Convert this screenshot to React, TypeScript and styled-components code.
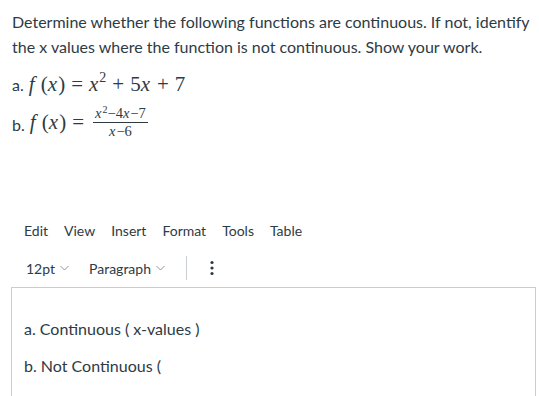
import React from "react";
import styled, { createGlobalStyle } from "styled-components";

const GlobalStyle = createGlobalStyle`
  body {
    margin: 0;
    background: #fff;
    font-family: Lato, "Noto Sans", sans-serif;
    color: #2d3b45;
  }
`;

const Page = styled.div`
  width: 539px;
  height: 396px;
  overflow: hidden;
  padding: 0 3px 0 12px;
  box-sizing: border-box;
`;

const Question = styled.div`
  font-size: 16px;
  line-height: 25px;
  padding-top: 9px;

  p {
    margin: 0 0 12px 0;
  }
`;

const MathLine = styled.p<{ $gap?: number }>`
  display: flex;
  align-items: center;
  height: 26px;
  margin-top: ${(p) => p.$gap ?? 0}px !important;
`;

const Formula = styled.span`
  font-family: "Liberation Serif", "DejaVu Serif", serif;
  font-size: 21px;
  margin-left: 5px;
  white-space: pre;
  line-height: 26px;
`;

const V = styled.i`
  font-style: italic;
  padding-right: 1px;
`;

const Op = styled.span`
  padding: 0 6px;
`;

const Sup = styled.sup<{ $size: number }>`
  font-size: ${(p) => p.$size}px;
  line-height: 0;
  vertical-align: ${(p) => (p.$size > 10 ? "9px" : "5px")};
`;

const Frac = styled.span`
  display: inline-flex;
  flex-direction: column;
  align-items: center;
  vertical-align: middle;
  font-size: 14.5px;
  line-height: 15px;
  margin-left: 3px;
  position: relative;
  top: -2px;
`;

const Num = styled.span`
  border-bottom: 1px solid #2d3b45;
  padding: 0 2px 1px;
`;

const Den = styled.span`
  padding-top: 1px;
`;

const MenuBar = styled.div`
  display: flex;
  gap: 16px;
  font-size: 14px;
  margin-top: 83px;
  padding-left: 12px;
  height: 20px;
  align-items: center;
`;

const Toolbar = styled.div`
  display: flex;
  align-items: center;
  font-size: 14px;
  margin-top: 16px;
  padding-left: 14px;
  height: 24px;
`;

const Dropdown = styled.span`
  display: inline-flex;
  align-items: center;
  gap: 5px;
  margin-right: 20px;
`;

const Divider = styled.span`
  width: 1px;
  height: 24px;
  background: #c7cdd1;
  margin: 0 23px 0 1px;
`;

const Editor = styled.div`
  margin: 7px 0 0 -1px;
  border: 1px solid #c7cdd1;
  border-bottom: none;
  height: 120px;
  padding: 28px 12px 0;
  font-size: 16px;

  p {
    margin: 0 0 12px 0;
    line-height: 25px;
  }
`;

const Chevron = () => (
  <svg width="9" height="6" viewBox="0 0 9 6">
    <path d="M0.5 1l4 4 4-4" fill="none" stroke="#8b969e" strokeWidth="1" />
  </svg>
);

const Kebab = () => (
  <svg width="4" height="16" viewBox="0 0 4 16">
    <circle cx="2" cy="2.5" r="1.6" fill="#2d3b45" />
    <circle cx="2" cy="8" r="1.6" fill="#2d3b45" />
    <circle cx="2" cy="13.5" r="1.6" fill="#2d3b45" />
  </svg>
);

export default function App() {
  return (
    <Page>
      <GlobalStyle />
      <Question>
        <p>
          Determine whether the following functions are continuous. If not, identify the x values
          where the function is not continuous. Show your work.
        </p>
        <MathLine>
          a.
          <Formula>
            <V>f</V> (<V>x</V>)<Op>=</Op>
            <V>x</V>
            <Sup $size={14}>2</Sup>
            <Op>+</Op>5<V>x</V>
            <Op>+</Op>7
          </Formula>
        </MathLine>
        <MathLine $gap={14}>
          b.
          <Formula>
            <V>f</V> (<V>x</V>)<Op>=</Op>
            <Frac>
              <Num>
                <V>x</V>
                <Sup $size={10}>2</Sup>−4<V>x</V>−7
              </Num>
              <Den>
                <V>x</V>−6
              </Den>
            </Frac>
          </Formula>
        </MathLine>
      </Question>
      <MenuBar>
        <span>Edit</span>
        <span>View</span>
        <span>Insert</span>
        <span>Format</span>
        <span>Tools</span>
        <span>Table</span>
      </MenuBar>
      <Toolbar>
        <Dropdown>
          12pt <Chevron />
        </Dropdown>
        <Dropdown>
          Paragraph <Chevron />
        </Dropdown>
        <Divider />
        <Kebab />
      </Toolbar>
      <Editor>
        <p>a. Continuous ( x-values )</p>
        <p>b. Not Continuous (</p>
      </Editor>
    </Page>
  );
}
